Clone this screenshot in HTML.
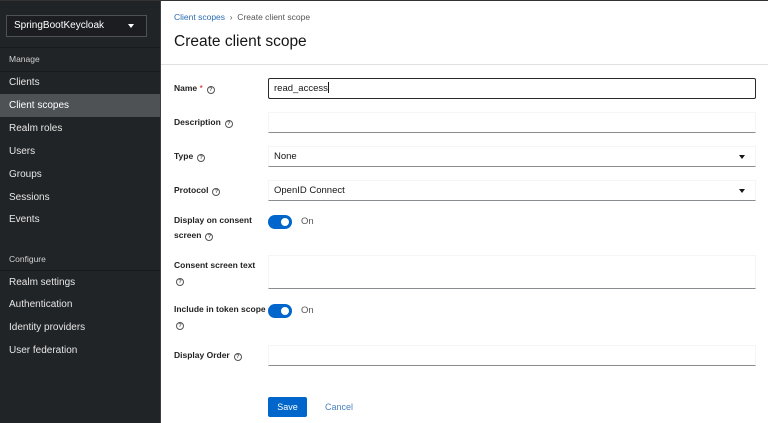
<!DOCTYPE html>
<html><head><meta charset="utf-8"><style>
*{box-sizing:border-box;margin:0;padding:0}
body{width:768px;height:423px;overflow:hidden;font-family:"Liberation Sans",sans-serif;background:#fff;position:relative}
.top{position:absolute;left:0;top:0;width:768px;height:1px;background:#333}
.side{position:absolute;left:0;top:1px;width:161px;height:422px;background:#212427;border-right:1px solid #3c3f42;color:#e0e0e0;font-size:10px}
.sel{position:absolute;left:6px;top:14px;width:141px;height:22px;border:1px solid #4f5255;background:#1b1d21;color:#fff;font-size:10px;line-height:20px;padding-left:7px}
.sel:after{content:"";position:absolute;right:12px;top:8px;border-left:3.5px solid transparent;border-right:3.5px solid transparent;border-top:4px solid #fff}
.it{position:absolute;left:0;width:160px;height:23px;line-height:23px;padding-left:9px;color:#e6e6e6}
.hd{font-size:8.5px;color:#d0d0d0}
.line{position:absolute;left:0;width:160px;height:1px;background:#17191b}
.act{background:#4f5255;color:#fff}
.bc{position:absolute;left:174px;top:12px;font-size:8.5px;color:#555}
.bc a{color:#2b6cb0}
h1{position:absolute;left:174px;top:33px;font-size:15.5px;font-weight:normal;color:#151515}
.hr{position:absolute;left:161px;top:64px;width:607px;height:1px;background:#e0e0e0}
.lb{position:absolute;left:174px;font-size:8.5px;font-weight:bold;color:#222;line-height:16px}
.q{display:inline-block;width:8px;height:8px;border:1px solid #555;border-radius:50%;font-size:5.5px;line-height:6px;text-align:center;font-weight:bold;vertical-align:0;margin-left:4px;color:#555}
.in{position:absolute;left:268px;width:488px;height:21px;border:1px solid #f5f5f5;border-bottom:1px solid #8a8d90;font-size:9.5px;line-height:19px;padding-left:5px;color:#151515}
.dd:after{content:"";position:absolute;right:10px;top:8px;border-left:3px solid transparent;border-right:3px solid transparent;border-top:4px solid #151515}
.tg{position:absolute;left:268px;width:24px;height:14px;background:#0066cc;border-radius:7px}
.tg:after{content:"";position:absolute;right:3px;top:3px;width:8px;height:8px;background:#fff;border-radius:50%}
.on{position:absolute;left:301px;font-size:9.5px;color:#555}
.btn{position:absolute;left:268px;top:397px;width:39px;height:20px;background:#0066cc;color:#fff;border-radius:2px;font-size:9px;text-align:center;line-height:20px}
.cn{position:absolute;left:325px;top:397px;font-size:9px;color:#4a80c0;line-height:20px}
</style></head><body>
<div class="top"></div>
<div class="side">
<div class="sel">SpringBootKeycloak</div>
<div class="line" style="top:46px"></div>
<div class="it hd" style="top:47px">Manage</div>
<div class="line" style="top:70px"></div>
<div class="it" style="top:70px">Clients</div>
<div class="it act" style="top:93px">Client scopes</div>
<div class="it" style="top:116px">Realm roles</div>
<div class="it" style="top:139px">Users</div>
<div class="it" style="top:162px">Groups</div>
<div class="it" style="top:185px">Sessions</div>
<div class="it" style="top:207px">Events</div>
<div class="it hd" style="top:247px">Configure</div>
<div class="line" style="top:269px"></div>
<div class="it" style="top:270px">Realm settings</div>
<div class="it" style="top:292px">Authentication</div>
<div class="it" style="top:315px">Identity providers</div>
<div class="it" style="top:338px">User federation</div>
</div>
<div class="bc"><a>Client scopes</a> &nbsp;›&nbsp; Create client scope</div>
<h1>Create client scope</h1>
<div class="hr"></div>
<div class="lb" style="top:80px">Name <span style="color:#c9190b;font-weight:normal">*</span><span class="q">?</span></div>
<div class="in" style="top:78px;border:1px solid #2a2a2a;border-radius:2px">read_access<span style="display:inline-block;width:1px;height:11px;background:#151515;vertical-align:-2px"></span></div>
<div class="lb" style="top:114px">Description<span class="q">?</span></div>
<div class="in" style="top:112px"></div>
<div class="lb" style="top:148px">Type<span class="q">?</span></div>
<div class="in dd" style="top:146px">None</div>
<div class="lb" style="top:182px">Protocol<span class="q">?</span></div>
<div class="in dd" style="top:180px">OpenID Connect</div>
<div class="lb" style="top:213px;line-height:15px">Display on consent<br>screen<span class="q">?</span></div>
<div class="tg" style="top:215px"></div><div class="on" style="top:216px">On</div>
<div class="lb" style="top:258px;line-height:15px">Consent screen text<br><span class="q" style="margin-left:2px">?</span></div>
<div class="in" style="top:255px;height:34px"></div>
<div class="lb" style="top:302px;line-height:15px">Include in token scope<br><span class="q" style="margin-left:2px">?</span></div>
<div class="tg" style="top:304px"></div><div class="on" style="top:305px">On</div>
<div class="lb" style="top:347px">Display Order<span class="q">?</span></div>
<div class="in" style="top:345px"></div>
<div class="btn">Save</div>
<div class="cn">Cancel</div>
</body></html>
